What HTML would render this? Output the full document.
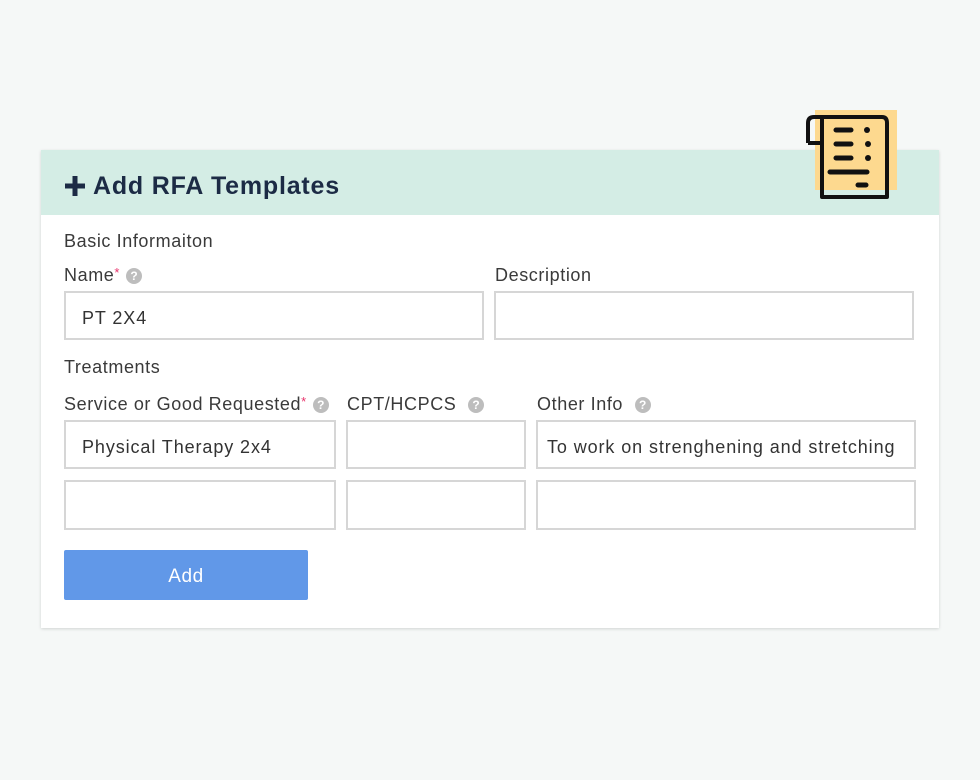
<!DOCTYPE html>
<html><head><style>
body{margin:0;width:980px;height:780px;background:#f5f8f7;font-family:"Liberation Sans",sans-serif;position:relative;overflow:hidden}
.a{position:absolute}
.card{left:41px;top:150px;width:898px;height:478px;background:#fff;box-shadow:0 1px 3px rgba(0,0,0,.15)}
.hd{left:41px;top:150px;width:898px;height:65px;background:#d4ede5}
.t{color:#3a3a3a;font-size:18px;letter-spacing:0.6px}
.in{border:2px solid #d6d6d6;box-sizing:border-box;background:#fff;font-size:18px;color:#333;padding-left:16px;padding-top:5px;display:flex;align-items:center;letter-spacing:0.9px}
.q{display:inline-block;width:16px;height:16px;border-radius:50%;background:#bdbdbd;color:#fff;font-size:12px;font-weight:bold;text-align:center;line-height:16px;vertical-align:1px;margin-left:6px;letter-spacing:0}
.s{color:#e8336b;font-size:13px;vertical-align:4px}
</style></head><body>
<div class="a card"></div>
<div class="a hd"></div>
<svg class="a" style="left:64px;top:175px" width="22" height="22" viewBox="0 0 22 22"><path d="M11 1V21M1 11H21" stroke="#1c2b45" stroke-width="5"/></svg>
<div class="a" style="left:93px;top:172px;font-size:25px;font-weight:bold;color:#1c2b45;letter-spacing:0.8px">Add RFA Templates</div>
<svg class="a" style="left:800px;top:105px" width="100" height="100" viewBox="0 0 100 100">
<rect x="15" y="5" width="82" height="80" fill="#fdd98f"/>
<path d="M8 38 V18 Q8 12 14 12 H82 Q87 12 87 18 V92 H22 V14" fill="none" stroke="#111" stroke-width="4" stroke-linejoin="round"/>
<path d="M8 38 H20" stroke="#111" stroke-width="4"/>
<g stroke="#111" stroke-width="5" stroke-linecap="round"><path d="M36 25H51M36 39H51M36 53H51M30 67H67M58 80H66"/></g>
<g fill="#111"><circle cx="67" cy="25" r="3"/><circle cx="68" cy="39" r="3"/><circle cx="68" cy="53" r="3"/></g>
</svg>
<div class="a t" style="left:64px;top:231px">Basic Informaiton</div>
<div class="a t" style="left:64px;top:265px">Name<span class="s">*</span><span class="q">?</span></div>
<div class="a t" style="left:495px;top:265px">Description</div>
<div class="a in" style="left:64px;top:291px;width:420px;height:49px">PT 2X4</div>
<div class="a in" style="left:494px;top:291px;width:420px;height:49px"></div>
<div class="a t" style="left:64px;top:357px">Treatments</div>
<div class="a t" style="left:64px;top:394px">Service or Good Requested<span class="s">*</span><span class="q">?</span></div>
<div class="a t" style="left:347px;top:394px">CPT/HCPCS <span class="q">?</span></div>
<div class="a t" style="left:537px;top:394px">Other Info <span class="q">?</span></div>
<div class="a in" style="left:64px;top:420px;width:272px;height:49px">Physical Therapy 2x4</div>
<div class="a in" style="left:346px;top:420px;width:180px;height:49px"></div>
<div class="a in" style="left:536px;top:420px;width:380px;height:49px;padding-left:9px;white-space:nowrap;overflow:hidden">To work on strenghening and stretching</div>
<div class="a in" style="left:64px;top:480px;width:272px;height:50px"></div>
<div class="a in" style="left:346px;top:480px;width:180px;height:50px"></div>
<div class="a in" style="left:536px;top:480px;width:380px;height:50px"></div>
<div class="a" style="left:64px;top:550px;width:244px;height:50px;background:#6198e8;border-radius:2px;color:#fff;font-size:19px;text-align:center;line-height:54px;letter-spacing:0.6px">Add</div>
</body></html>
